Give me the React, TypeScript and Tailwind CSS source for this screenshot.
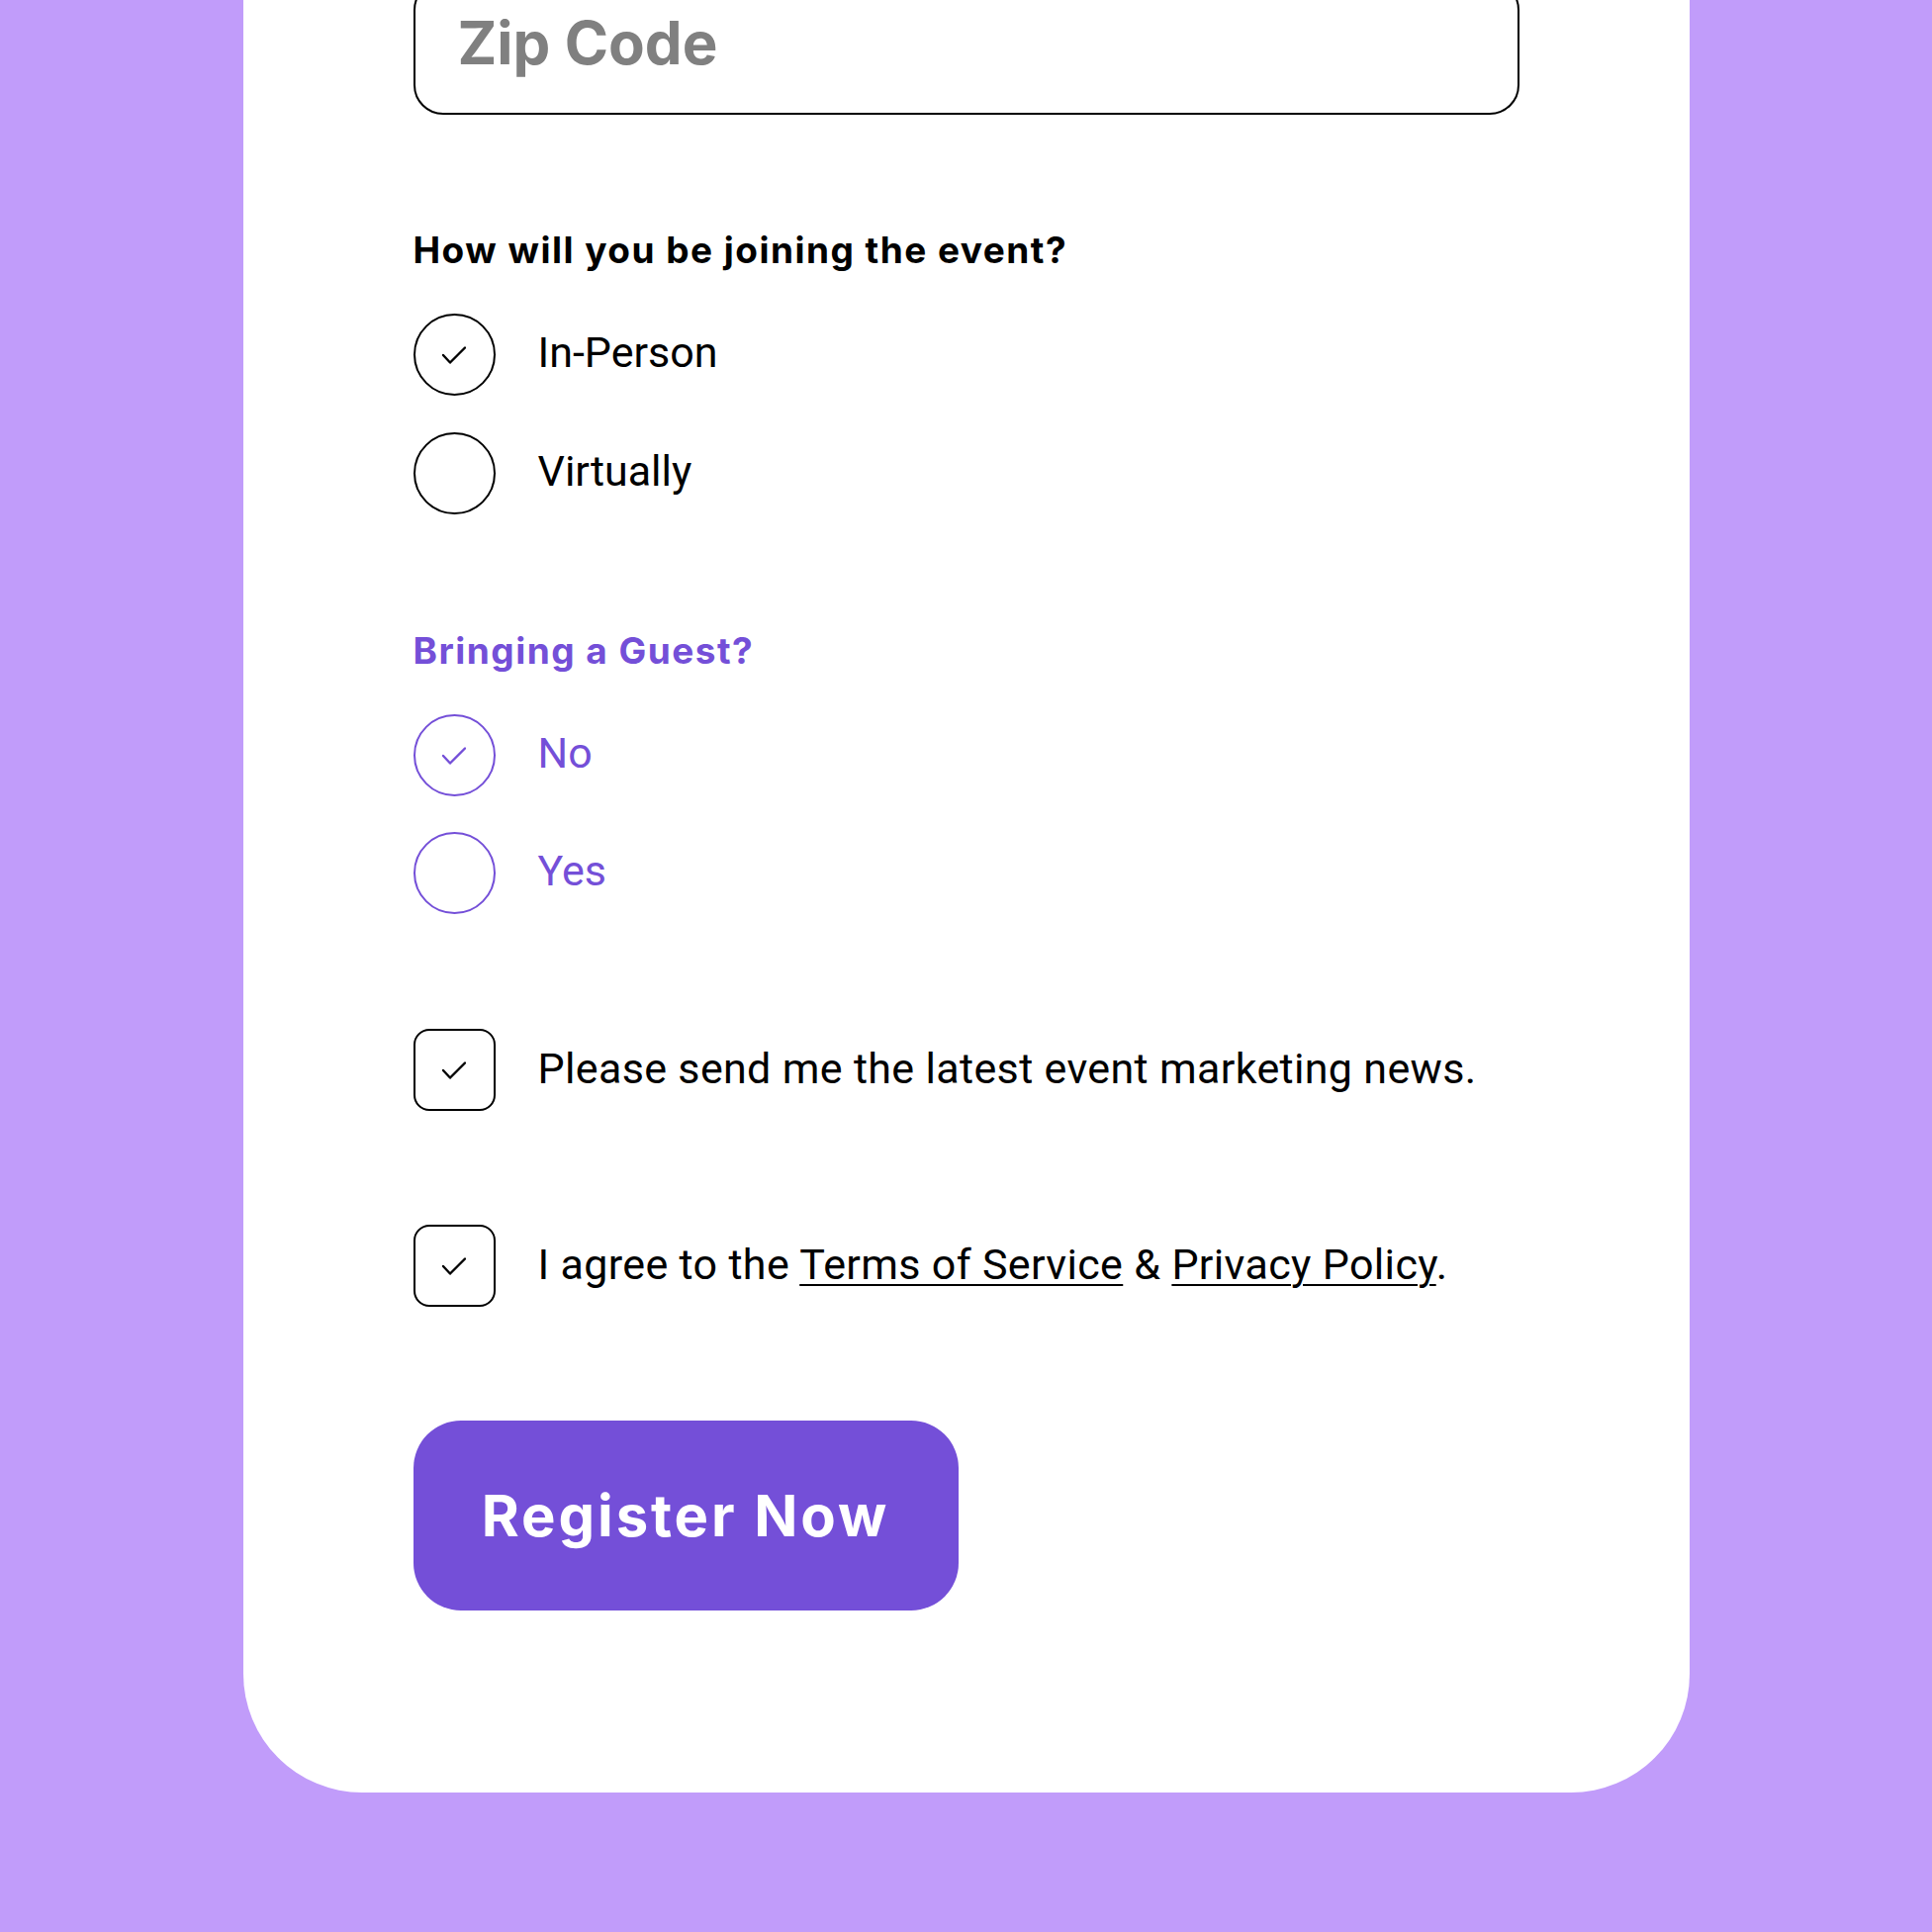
import { useState } from "react";

const Check = ({ className = "" }: { className?: string }) => (
  <svg width="24" height="18" viewBox="0 0 24 18" fill="none" className={className}>
    <polyline points="1,9 8,16.5 23,1.5" stroke="currentColor" strokeWidth="2.4" strokeLinecap="round" strokeLinejoin="round" />
  </svg>
);

type RadioProps = {
  label: string;
  checked: boolean;
  purple?: boolean;
  onClick: () => void;
};

function Radio({ label, checked, purple, onClick }: RadioProps) {
  return (
    <button type="button" onClick={onClick} className="flex items-center gap-[43px] text-left">
      <span
        className={`flex h-[83px] w-[83px] items-center justify-center rounded-full border-[2.5px] ${
          purple ? "border-[#744FD8] text-[#744FD8]" : "border-black text-black"
        }`}
      >
        {checked && <Check />}
      </span>
      <span
        className={`pb-[5px] font-['Roboto',sans-serif] text-[43px] ${purple ? "text-[#744FD8]" : "text-black"}`}
      >
        {label}
      </span>
    </button>
  );
}

function Checkbox({ checked, onClick, children }: { checked: boolean; onClick: () => void; children: React.ReactNode }) {
  return (
    <div className="flex items-center gap-[43px]">
      <button
        type="button"
        onClick={onClick}
        className="flex h-[83px] w-[83px] shrink-0 items-center justify-center rounded-[16px] border-[2.5px] border-black text-black"
      >
        {checked && <Check />}
      </button>
      <p className="pb-[3px] font-['Roboto',sans-serif] text-[43px] tracking-[0.008em] text-black">{children}</p>
    </div>
  );
}

export default function App() {
  const [joining, setJoining] = useState("in-person");
  const [guest, setGuest] = useState("no");
  const [news, setNews] = useState(true);
  const [terms, setTerms] = useState(true);

  return (
    <div className="h-[1953px] w-full overflow-hidden bg-[#C19CFA]">
      <form className="mx-auto -mt-[20px] w-[1462px] rounded-b-[120px] bg-white px-[172px] pb-[184px]">
        {/* Campo: Zip Code */}
        <div className="flex h-[136px] items-center rounded-[30px] border-[2.5px] border-black pb-[10px] pl-[43px]">
          <input
            placeholder="Zip Code"
            className="w-full bg-transparent font-['Inter',sans-serif] text-[60px] font-bold text-[#808080] outline-none placeholder:text-[#808080]"
          />
        </div>

        {/* Participação */}
        <h2 className="mt-[115px] font-['Inter',sans-serif] text-[37px] font-bold leading-[44px] tracking-[0.04em] text-black">
          How will you be joining the event?
        </h2>
        <div className="mt-[42px] flex flex-col gap-[37px]">
          <Radio label="In-Person" checked={joining === "in-person"} onClick={() => setJoining("in-person")} />
          <Radio label="Virtually" checked={joining === "virtually"} onClick={() => setJoining("virtually")} />
        </div>

        {/* Convidado */}
        <h2 className="mt-[116px] font-['Inter',sans-serif] text-[37px] font-bold leading-[44px] tracking-[0.04em] text-[#744FD8]">
          Bringing a Guest?
        </h2>
        <div className="mt-[42px] flex flex-col gap-[36px]">
          <Radio purple label="No" checked={guest === "no"} onClick={() => setGuest("no")} />
          <Radio purple label="Yes" checked={guest === "yes"} onClick={() => setGuest("yes")} />
        </div>

        {/* Checkboxes */}
        <div className="mt-[116px] flex flex-col gap-[115px]">
          <Checkbox checked={news} onClick={() => setNews(!news)}>
            Please send me the latest event marketing news.
          </Checkbox>
          <Checkbox checked={terms} onClick={() => setTerms(!terms)}>
            I agree to the{" "}
            <a className="underline decoration-[1.5px] underline-offset-[5px]">Terms of Service</a> &amp;{" "}
            <a className="underline decoration-[1.5px] underline-offset-[5px]">Privacy Policy</a>.
          </Checkbox>
        </div>

        <button
          type="submit"
          className="mt-[115px] flex h-[192px] w-[551px] items-center justify-center rounded-[48px] bg-[#744FD8] font-['Inter',sans-serif] text-[58px] font-bold tracking-[0.05em] text-white"
        >
          Register Now
        </button>
      </form>
    </div>
  );
}
